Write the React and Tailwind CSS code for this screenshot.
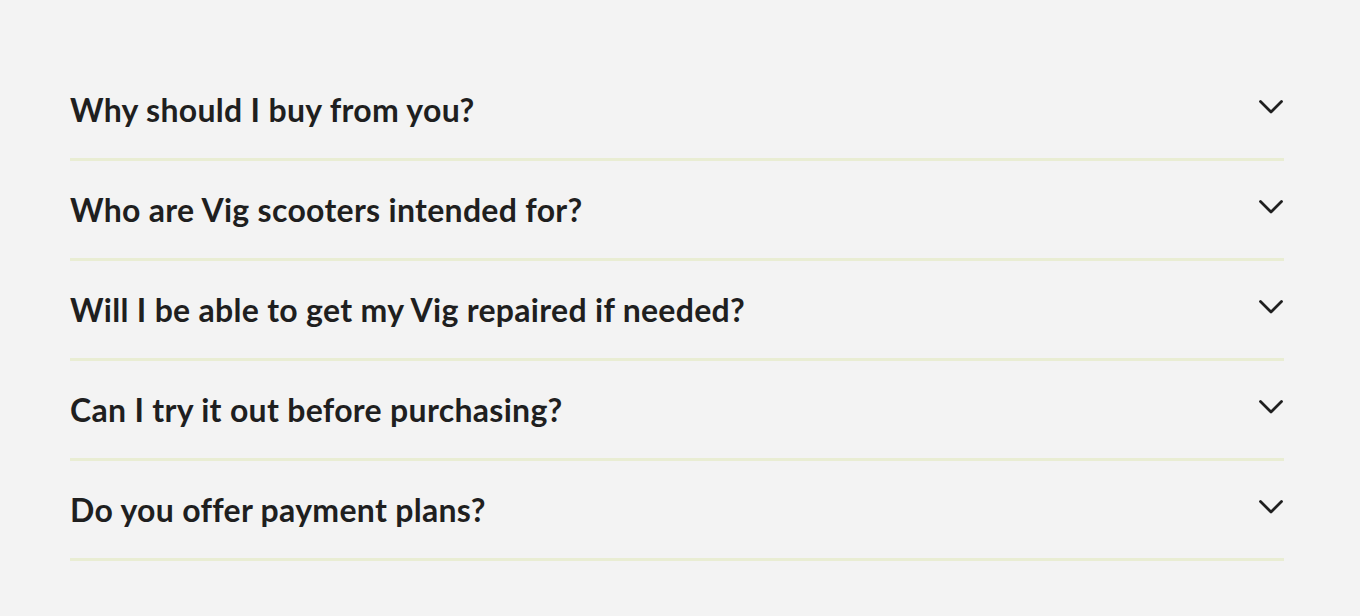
import React, { useState } from "react";

const questions = [
  "Why should I buy from you?",
  "Who are Vig scooters intended for?",
  "Will I be able to get my Vig repaired if needed?",
  "Can I try it out before purchasing?",
  "Do you offer payment plans?",
];

const Chevron = () => (
  <svg width="24" height="14" viewBox="0 0 24 14" fill="none">
    <path d="M1.5 1.5 L12 12 L22.5 1.5" stroke="#1f1f1f" strokeWidth="2.8" strokeLinecap="round" strokeLinejoin="round" />
  </svg>
);

const App = () => {
  const [open, setOpen] = useState(null);

  return (
    <div className="min-h-[616px] w-full bg-[#f3f3f3] pt-[61px] px-[70px]" style={{ fontFamily: '"Lato", "Noto Sans", sans-serif' }}>
      <div className="w-[1214px]">
        {questions.map((q, i) => (
          <div key={q} className="border-b-[3px] border-[#e9edd3]">
            <button
              onClick={() => setOpen(open === i ? null : i)}
              className="w-full h-[97px] flex items-center justify-between text-left"
            >
              <span className="text-[32px] font-bold text-[#1f1f1f] tracking-[0.3px] leading-none">{q}</span>
              <span className="mr-[1px] -mt-[5px]">
                <Chevron />
              </span>
            </button>
          </div>
        ))}
      </div>
    </div>
  );
};

export default App;
